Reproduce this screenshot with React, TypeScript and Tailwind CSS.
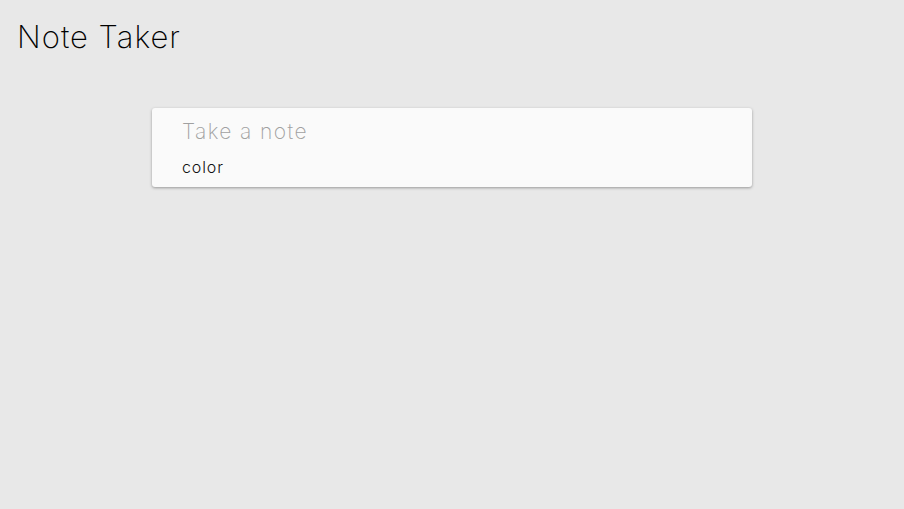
import React from "react";

export default function App() {
  return (
    <div className="min-h-[509px] w-full bg-[#e8e8e8] text-[#111]" style={{ fontFamily: "Inter, 'Open Sans', sans-serif" }}>
      <header className="px-[17px] pt-[17px]">
        <h1 className="text-[31px] font-extralight leading-[40px] tracking-[1px] text-[#000]">Note Taker</h1>
      </header>
      <main className="flex justify-center pt-[51px]">
        <div className="w-[600px] h-[79px] rounded-[3px] bg-[#fafafa] shadow-[0_1px_3px_rgba(0,0,0,0.35)] pl-[30px] pt-[10px]">
          <div className="text-[21px] font-extralight leading-[28px] tracking-[1.4px] text-[#a0a0a0]">Take a note</div>
          <div className="mt-[10px] text-[16px] font-light leading-[22px] tracking-[0.9px] text-[#111]">color</div>
        </div>
      </main>
    </div>
  );
}
